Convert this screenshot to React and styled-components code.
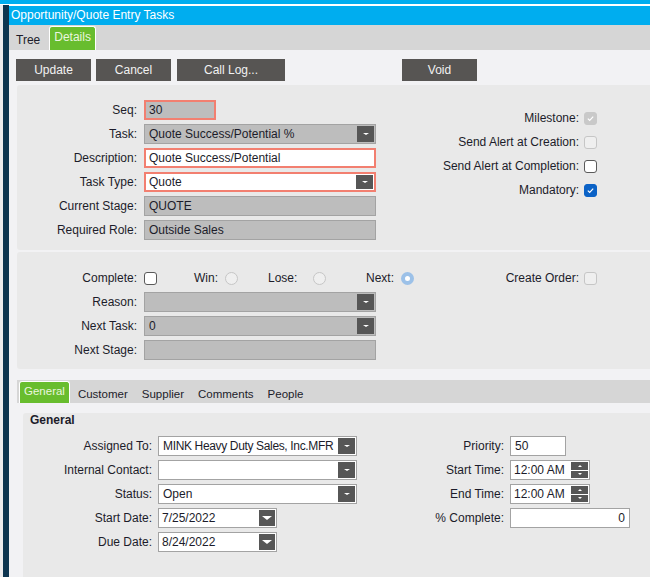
import styled, { createGlobalStyle } from "styled-components"

const GlobalStyle = createGlobalStyle`
  html, body {
    margin: 0;
    padding: 0;
    background: #fff;
  }
  body {
    font-family: "Liberation Sans", Arial, sans-serif;
    font-size: 12px;
    color: #1c1c2a;
    overflow: hidden;
  }
`

const TopStripe = styled.div`
  height: 4px;
  background: #00adef;
  margin-bottom: 1px;
`

const Frame = styled.div`
  display: flex;
  height: 572px;
`

const Gutter = styled.div`
  width: 3px;
  background: #ececee;
`

const SideBar = styled.div`
  width: 6px;
  background: #0d3550;
`

const Main = styled.div`
  flex: 1;
  min-width: 0;
  display: flex;
  flex-direction: column;
  background: #f2f2f4;
  overflow: hidden;
`

const TitleBar = styled.div`
  height: 19px;
  line-height: 19px;
  border-top: 1px solid #fff;
  background: #00adef;
  color: #fff;
  padding-left: 2px;
`

const TabBar = styled.div`
  display: flex;
  align-items: flex-end;
  gap: 2px;
  height: ${({ $h }) => $h}px;
  background: #d6d6d6;
  padding-left: ${({ $pl }) => $pl || 0}px;
  margin: ${({ $m }) => $m || 0};
  box-sizing: border-box;
  font-size: ${({ $fs }) => $fs || 12}px;
`

const Tab = styled.div`
  box-sizing: border-box;
  height: ${({ $h }) => $h}px;
  line-height: ${({ $active, $h }) => ($active ? $h - 4 : $h + 3)}px;
  padding: 0 ${({ $active, $px }) => ($active ? 4 : $px || 7)}px;
  color: ${({ $active }) => ($active ? "#eaf6df" : "#1c1c2a")};
  background: ${({ $active }) => ($active ? "#68bd2e" : "transparent")};
  border: ${({ $active }) => ($active ? "1px solid #fff" : "none")};
  border-bottom: none;
  border-radius: 3px 3px 0 0;
`

const ButtonRow = styled.div`
  display: flex;
  padding: 9px 0 0 7px;
`

const ActionButton = styled.button`
  height: 22px;
  width: ${({ $w }) => $w}px;
  margin-left: ${({ $ml }) => $ml || 0}px;
  border: none;
  background: #575553;
  color: #f2f2f2;
  font: inherit;
  padding: 0;
`

const Panel = styled.div`
  margin: ${({ $m }) => $m};
  background: #e9e9e9;
  border-radius: 3px 0 0 3px;
  padding: ${({ $p }) => $p};
  display: flex;
`

const FormGrid = styled.div`
  display: grid;
  grid-template-columns: ${({ $cols }) => $cols};
  grid-auto-rows: 24px;
  column-gap: ${({ $gap }) => $gap}px;
  align-items: center;
  margin-left: ${({ $ml }) => $ml || 0}px;
  margin-top: ${({ $mt }) => $mt || 0}px;
  align-self: flex-start;
`

const Label = styled.div`
  text-align: right;
  white-space: nowrap;
`

const Field = styled.div`
  box-sizing: border-box;
  display: flex;
  align-items: stretch;
  height: 20px;
  width: ${({ $w }) => $w}px;
  background: ${({ $gray }) => ($gray ? "#bdbdbd" : "#fff")};
  border: ${({ $req }) => ($req ? "2px solid #f27f70" : "1px solid #a3a3a3")};
`

const FieldText = styled.span`
  flex: 1;
  min-width: 0;
  line-height: ${({ $req }) => ($req ? 16 : 18)}px;
  padding: 0 ${({ $right }) => ($right ? 4 : 0)}px 0 ${({ $pl }) => $pl}px;
  text-align: ${({ $right }) => ($right ? "right" : "left")};
  letter-spacing: ${({ $tight }) => ($tight ? "-0.35px" : "normal")};
  white-space: nowrap;
  overflow: hidden;
`

const DropButton = styled.span`
  width: ${({ $w }) => $w}px;
  margin: ${({ $inset }) => $inset}px;
  background: #565656;
  display: flex;
  align-items: center;
  justify-content: center;

  &::after {
    content: "";
    border-left: ${({ $t }) => $t}px solid transparent;
    border-right: ${({ $t }) => $t}px solid transparent;
    border-top: ${({ $t }) => $t - 1}px solid #fff;
  }
`

const Spinner = styled.span`
  width: 17px;
  margin: 1px;
  display: flex;
  flex-direction: column;
  gap: 1px;
`

const SpinHalf = styled.span`
  flex: 1;
  background: #565656;
  display: flex;
  align-items: center;
  justify-content: center;

  &::after {
    content: "";
    border-left: 2px solid transparent;
    border-right: 2px solid transparent;
    ${({ $up }) => ($up ? "border-bottom: 2px solid #fff;" : "border-top: 2px solid #fff;")}
  }
`

const CheckBox = styled.span`
  box-sizing: border-box;
  width: 13px;
  height: 13px;
  border-radius: 3px;
  display: inline-flex;
  align-items: center;
  justify-content: center;
  flex-shrink: 0;
  background: ${({ $v }) =>
    $v === "on" ? "#0b62c6" : $v === "dis-on" ? "#c9c9c9" : $v === "dis" ? "#efefef" : "#fff"};
  border: 1px solid
    ${({ $v }) =>
      $v === "on" ? "#0b62c6" : $v === "dis-on" ? "#c9c9c9" : $v === "dis" ? "#c6c6c6" : "#5a5a5a"};
`

const Radio = styled.span`
  box-sizing: border-box;
  width: 13px;
  height: 13px;
  border-radius: 50%;
  flex-shrink: 0;
  background: ${({ $on }) => ($on ? "#fff" : "#efefef")};
  border: ${({ $on }) => ($on ? "4px solid #9cc1e8" : "1px solid #c6c6c6")};
`

const OptionRow = styled.div`
  display: flex;
  align-items: center;
`

const OptionLabel = styled.span`
  margin-left: ${({ $ml }) => $ml}px;
  width: ${({ $w }) => $w}px;
  white-space: nowrap;
`

const CheckCell = styled.div`
  display: flex;
  align-items: center;
  gap: 5px;
  margin-left: auto;
`

const Body = styled.div`
  flex: 1;
  margin: 10px 0 0 14px;
  background: #e9e9e9;
  border-radius: 3px 0 0 0;
`

const SectionTitle = styled.div`
  font-weight: bold;
  padding-left: 7px;
  line-height: 14px;
`

const Columns = styled.div`
  display: flex;
  margin-top: 7px;
`

const Check = ({ v }) => (
  <CheckBox $v={v}>
    {(v === "on" || v === "dis-on") && (
      <svg width="9" height="9" viewBox="0 0 9 9">
        <path d="M1.8 4.6 L3.7 6.4 L7.2 2.6" fill="none" stroke="#fff" strokeWidth="1.2" />
      </svg>
    )}
  </CheckBox>
)

const Select = ({ w, gray, req, tight, children }) => (
  <Field $w={w} $gray={gray} $req={req}>
    <FieldText $pl={req ? 3 : 4} $req={req} $tight={tight}>{children}</FieldText>
    <DropButton $w={17} $inset={1} $t={3} />
  </Field>
)

const Text = ({ w, gray, req, right, children }) => (
  <Field $w={w} $gray={gray} $req={req}>
    <FieldText $pl={req ? 3 : 4} $req={req} $right={right}>{children}</FieldText>
  </Field>
)

const DateInput = ({ children }) => (
  <Field $w={119}>
    <FieldText $pl={3}>{children}</FieldText>
    <DropButton $w={16} $inset={1} $t={5} />
  </Field>
)

const TimeInput = ({ children }) => (
  <Field $w={80}>
    <FieldText $pl={3}>{children}</FieldText>
    <Spinner>
      <SpinHalf $up />
      <SpinHalf />
    </Spinner>
  </Field>
)

export default function App() {
  return (
    <>
      <GlobalStyle />
      <TopStripe />
      <Frame>
        <Gutter />
        <SideBar />
        <Main>
          <TitleBar>Opportunity/Quote Entry Tasks</TitleBar>
          <TabBar $h={25}>
            <Tab $h={23}>Tree</Tab>
            <Tab $h={24} $active>Details</Tab>
          </TabBar>

          <ButtonRow>
            <ActionButton $w={75}>Update</ActionButton>
            <ActionButton $w={75} $ml={5}>Cancel</ActionButton>
            <ActionButton $w={108} $ml={6}>Call Log...</ActionButton>
            <ActionButton $w={75} $ml={117}>Void</ActionButton>
          </ButtonRow>

          <Panel $m="4px 0 0 8px" $p="13px 0 8px 0">
            <FormGrid $cols="120px 232px" $gap={7}>
              <Label>Seq:</Label>
              <Text w={72} gray req>30</Text>
              <Label>Task:</Label>
              <Select w={232} gray>Quote Success/Potential %</Select>
              <Label>Description:</Label>
              <Text w={232} req>Quote Success/Potential</Text>
              <Label>Task Type:</Label>
              <Select w={232} req>Quote</Select>
              <Label>Current Stage:</Label>
              <Text w={232} gray>QUOTE</Text>
              <Label>Required Role:</Label>
              <Text w={232} gray>Outside Sales</Text>
            </FormGrid>
            <FormGrid $cols="180px 13px" $gap={5} $ml={23} $mt={8}>
              <Label>Milestone:</Label>
              <Check v="dis-on" />
              <Label>Send Alert at Creation:</Label>
              <Check v="dis" />
              <Label>Send Alert at Completion:</Label>
              <Check v="off" />
              <Label>Mandatory:</Label>
              <Check v="on" />
            </FormGrid>
          </Panel>

          <Panel $m="2px 0 0 8px" $p="14px 0 7px 0">
            <FormGrid $cols="120px 453px" $gap={7}>
              <Label>Complete:</Label>
              <OptionRow>
                <Check v="off" />
                <OptionLabel $ml={37} $w={31}>Win:</OptionLabel>
                <Radio />
                <OptionLabel $ml={30} $w={45}>Lose:</OptionLabel>
                <Radio />
                <OptionLabel $ml={40} $w={35}>Next:</OptionLabel>
                <Radio $on />
                <CheckCell>
                  <span>Create Order:</span>
                  <Check v="dis" />
                </CheckCell>
              </OptionRow>
              <Label>Reason:</Label>
              <Select w={232} gray />
              <Label>Next Task:</Label>
              <Select w={232} gray>0</Select>
              <Label>Next Stage:</Label>
              <Text w={232} gray />
            </FormGrid>
          </Panel>

          <TabBar $h={23} $pl={2} $m="11px 0 0 8px" $fs={11.5}>
            <Tab $h={22} $active>General</Tab>
            <Tab $h={20} $px={6}>Customer</Tab>
            <Tab $h={20} $px={6}>Supplier</Tab>
            <Tab $h={20} $px={6}>Comments</Tab>
            <Tab $h={20} $px={6}>People</Tab>
          </TabBar>

          <Body>
            <SectionTitle>General</SectionTitle>
            <Columns>
              <FormGrid $cols="129px 199px" $gap={6}>
                <Label>Assigned To:</Label>
                <Select w={199} tight>MINK Heavy Duty Sales, Inc.MFR</Select>
                <Label>Internal Contact:</Label>
                <Select w={199} />
                <Label>Status:</Label>
                <Select w={199}>Open</Select>
                <Label>Start Date:</Label>
                <DateInput>7/25/2022</DateInput>
                <Label>Due Date:</Label>
                <DateInput>8/24/2022</DateInput>
              </FormGrid>
              <FormGrid $cols="140px 120px" $gap={6} $ml={7}>
                <Label>Priority:</Label>
                <Text w={56}>50</Text>
                <Label>Start Time:</Label>
                <TimeInput>12:00 AM</TimeInput>
                <Label>End Time:</Label>
                <TimeInput>12:00 AM</TimeInput>
                <Label>% Complete:</Label>
                <Text w={120} right>0</Text>
              </FormGrid>
            </Columns>
          </Body>
        </Main>
      </Frame>
    </>
  )
}
